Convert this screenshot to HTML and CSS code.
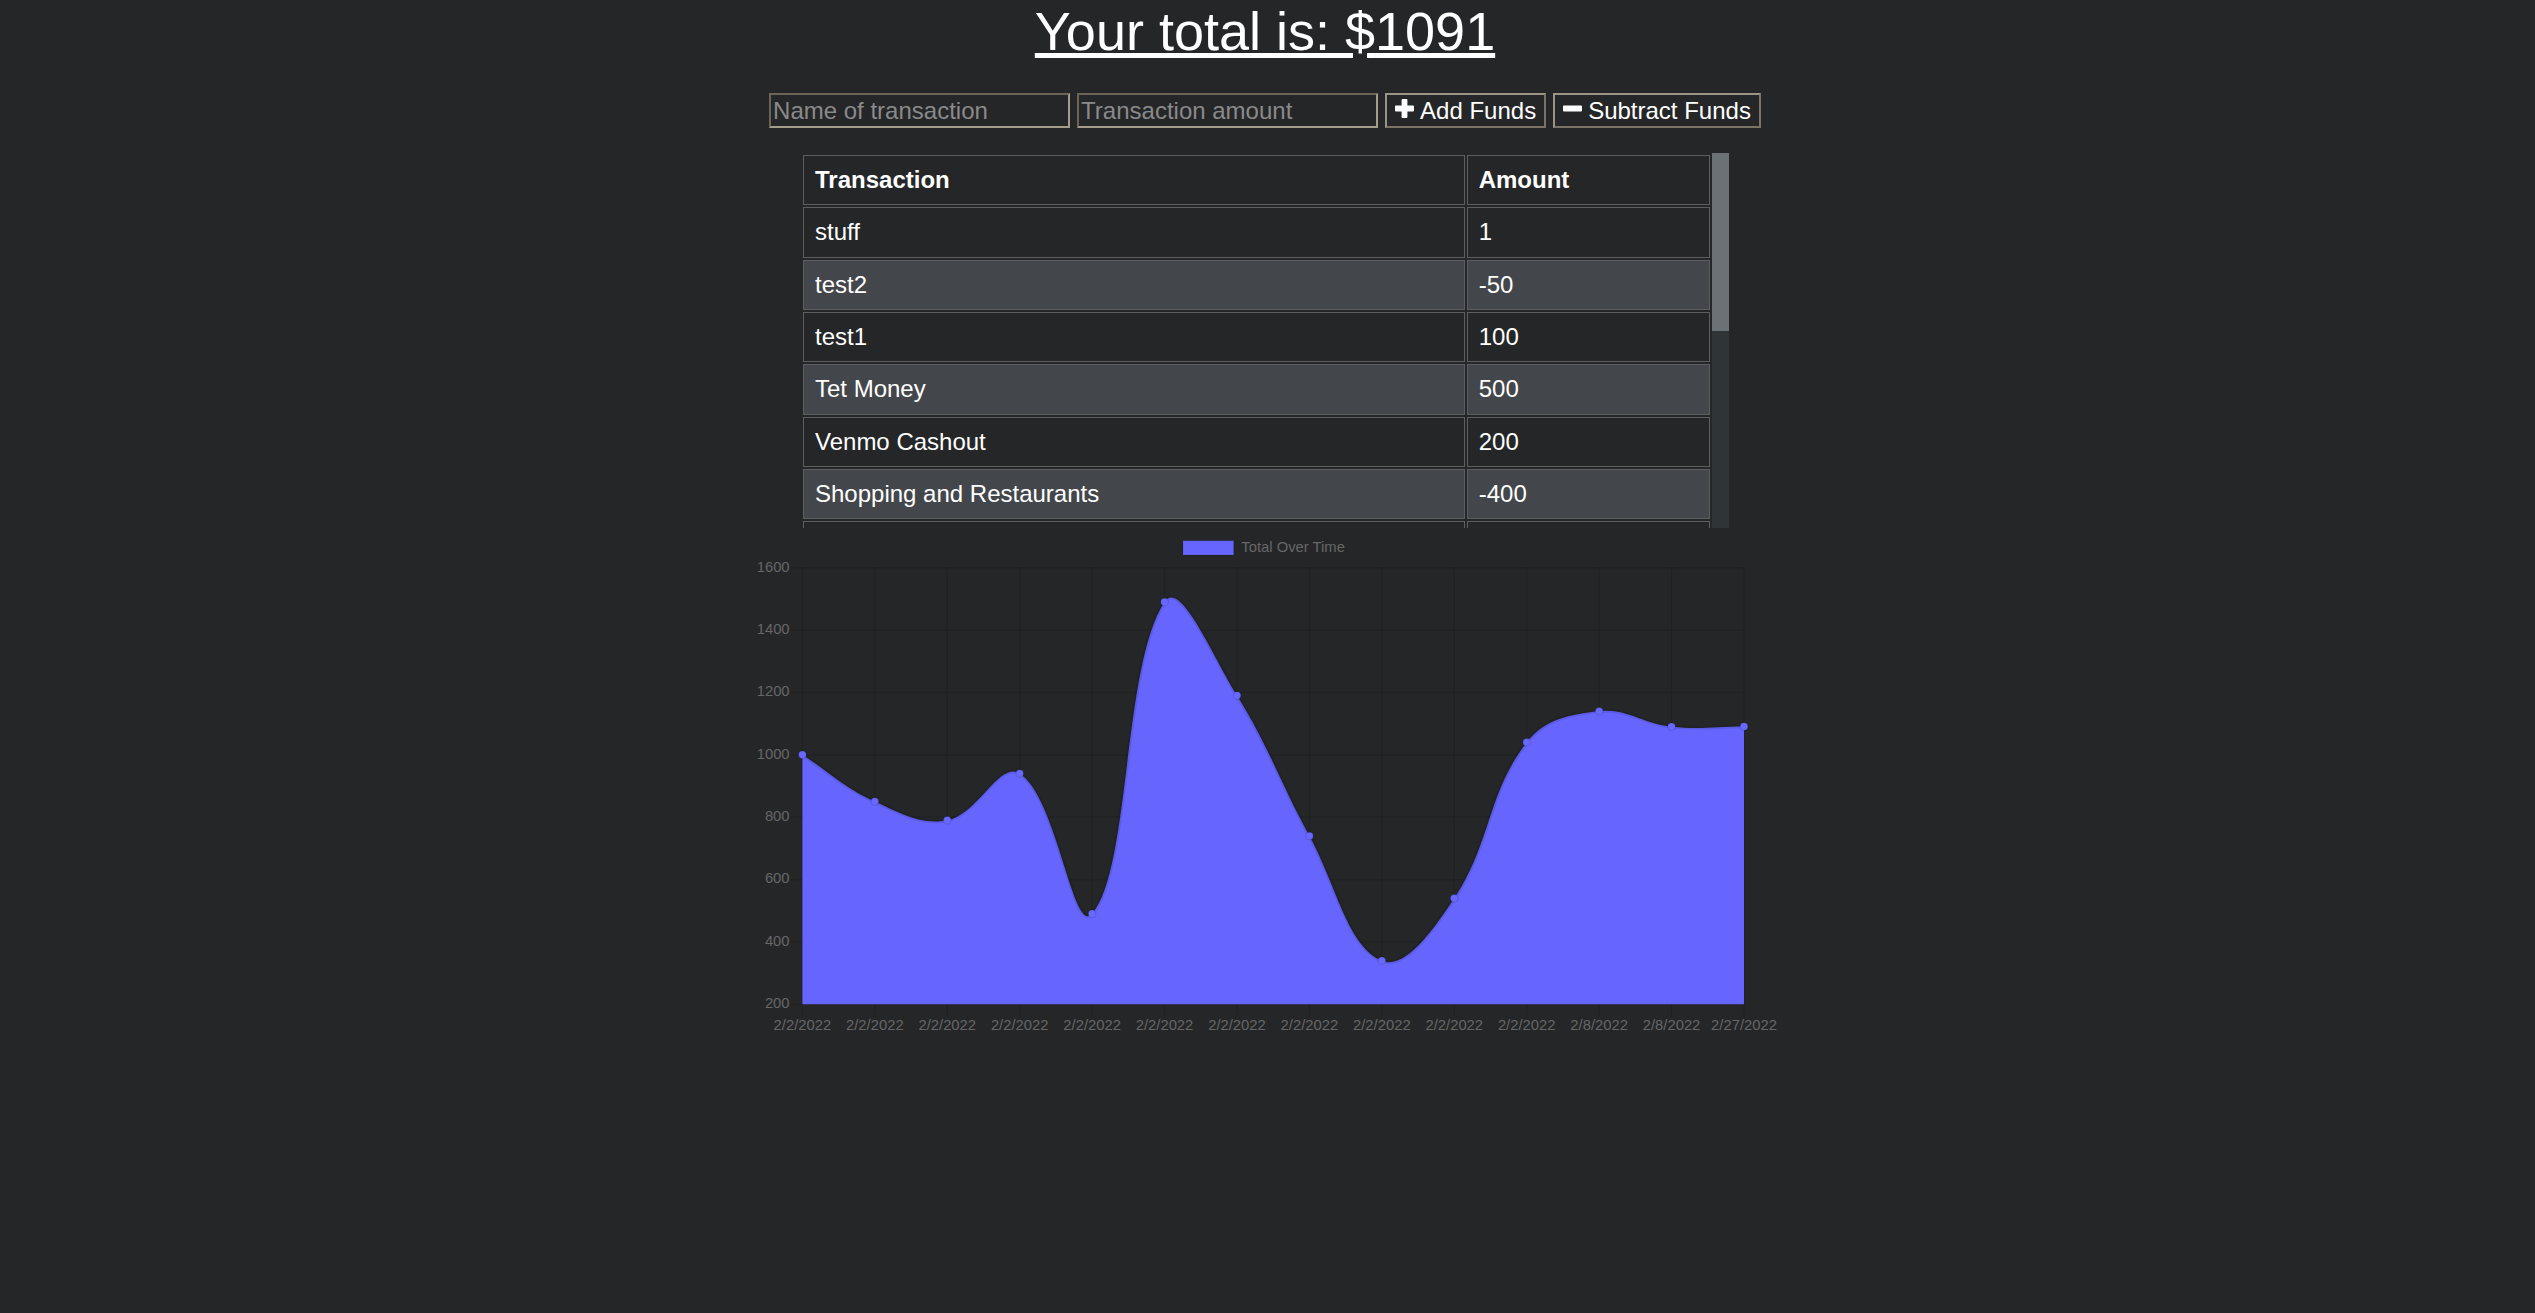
FILE: index.html
```html
<!DOCTYPE html>
<html lang="en">
<head>
<meta charset="utf-8">
<title>Budget Tracker</title>
<link rel="stylesheet" href="styles.css">
</head>
<body>
<h1 class="title">Your total is: $<span id="total">1091</span></h1>

<div class="entry">
  <input class="field" type="text" placeholder="Name of transaction">
  <input class="field" type="number" placeholder="Transaction amount">
  <button class="btn" type="button">
    <svg class="btn-icon" viewBox="0 0 19 19" aria-hidden="true"><path d="M7.6 0h3.8a1 1 0 0 1 1 1v5.6h5.6a1 1 0 0 1 1 1v3.8a1 1 0 0 1-1 1h-5.6v5.6a1 1 0 0 1-1 1H7.6a1 1 0 0 1-1-1v-5.6H1a1 1 0 0 1-1-1V7.6a1 1 0 0 1 1-1h5.6V1a1 1 0 0 1 1-1z"/></svg>
    <span>Add Funds</span>
  </button>
  <button class="btn" type="button">
    <svg class="btn-icon" viewBox="0 0 19 19" aria-hidden="true"><path d="M1 6.6h17a1 1 0 0 1 1 1v3.8a1 1 0 0 1-1 1H1a1 1 0 0 1-1-1V7.6a1 1 0 0 1 1-1z"/></svg>
    <span>Subtract Funds</span>
  </button>
</div>

<div class="ledger">
  <div class="ledger-view">
    <table class="ledger-table">
      <colgroup><col class="col-name"><col class="col-amt"></colgroup>
      <thead>
        <tr><th>Transaction</th><th>Amount</th></tr>
      </thead>
      <tbody>
        <tr><td>stuff</td><td>1</td></tr>
        <tr><td>test2</td><td>-50</td></tr>
        <tr><td>test1</td><td>100</td></tr>
        <tr><td>Tet Money</td><td>500</td></tr>
        <tr><td>Venmo Cashout</td><td>200</td></tr>
        <tr><td>Shopping and Restaurants</td><td>-400</td></tr>
        <tr><td>Rent</td><td>-450</td></tr>
        <tr><td>Groceries</td><td>-300</td></tr>
        <tr><td>Paycheck</td><td>1000</td></tr>
        <tr><td>Car Repair</td><td>-450</td></tr>
        <tr><td>Refund</td><td>150</td></tr>
        <tr><td>Dinner</td><td>-60</td></tr>
        <tr><td>Utilities</td><td>-150</td></tr>
        <tr><td>Initial Deposit</td><td>1000</td></tr>
      </tbody>
    </table>
  </div>
  <div class="ledger-track" aria-hidden="true"><div class="ledger-thumb"></div></div>
</div>

<svg id="chart" class="chart" viewBox="0 0 1040 520" aria-label="Total Over Time"></svg>

<script src="app.js"></script>
</body>
</html>
```

FILE: styles.css
```css
html, body {
  margin: 0;
}

body {
  background: #252628;
  color: #ffffff;
  font-family: "Liberation Sans", Arial, sans-serif;
  padding: 0 5px 0 0;
}

.title {
  margin: 0;
  padding-top: 1px;
  font-size: 54px;
  line-height: 60px;
  font-weight: normal;
  text-align: center;
  text-decoration: underline;
}

.entry {
  display: flex;
  justify-content: center;
  align-items: center;
  gap: 7px;
  margin-top: 32.3px;
  height: 35px;
}

.field {
  box-sizing: border-box;
  width: 301px;
  height: 35px;
  margin: 0;
  padding: 1px 2px;
  font: 24px "Liberation Sans", Arial, sans-serif;
  color: #ffffff;
  background: transparent;
  border: 2px solid;
  border-color: #6b6457 #a59c8c #a59c8c #6b6457;
  outline: none;
}

.field::placeholder {
  color: #8a8a8a;
}

.field::-webkit-outer-spin-button,
.field::-webkit-inner-spin-button {
  -webkit-appearance: none;
  margin: 0;
}

.btn {
  box-sizing: border-box;
  height: 35px;
  margin: 0;
  display: flex;
  align-items: center;
  gap: 6px;
  padding: 0 8px;
  font: 24px "Liberation Sans", Arial, sans-serif;
  color: #ffffff;
  background: transparent;
  border: 2px solid;
  border-color: #9b9384 #7a7366 #7a7366 #9b9384;
}

.btn-icon {
  width: 19px;
  height: 19px;
  flex: none;
  fill: #ffffff;
  margin-bottom: 4px;
}

.ledger {
  display: flex;
  width: 928px;
  height: 375px;
  margin: 24.7px auto 0;
}

.ledger-view {
  flex: 1;
  min-width: 0;
  overflow-y: auto;
  overflow-x: hidden;
  scrollbar-width: none;
}

.ledger-track {
  flex: none;
  width: 17px;
  background: #2f3536;
}

.ledger-thumb {
  height: 178px;
  background: #6b7275;
}

.ledger-table {
  width: 100%;
  table-layout: fixed;
  border-collapse: separate;
  border-spacing: 2px;
  font-size: 24px;
}

.col-name {
  width: 661.7px;
}

.col-amt {
  width: 243.7px;
}

.ledger-table th,
.ledger-table td {
  box-sizing: border-box;
  height: 50.33px;
  padding: 0 11px;
  line-height: 48.33px;
  border: 1px solid #5c5e60;
  text-align: left;
  white-space: nowrap;
  overflow: hidden;
}

.ledger-table th {
  font-weight: bold;
}

.ledger-table tbody tr:nth-child(even) td {
  background: #43474b;
}

.chart {
  display: block;
  width: 1040px;
  height: 520px;
  margin: 0 auto;
}

.chart .grid {
  stroke: rgba(0, 0, 0, 0.12);
  stroke-width: 1.25;
}

.chart .tick {
  font-family: "Liberation Sans", Arial, sans-serif;
  font-size: 14.8px;
  fill: #666666;
}

.chart .area {
  fill: #6666ff;
}

.chart .line {
  fill: none;
  stroke: rgba(0, 0, 0, 0.1);
  stroke-width: 3.75;
}

.chart .dot {
  fill: #6868ff;
  stroke: rgba(0, 0, 0, 0.1);
  stroke-width: 1.25;
}

.chart .legend-box {
  fill: #6666ff;
  stroke: rgba(0, 0, 0, 0.1);
  stroke-width: 1.25;
}
```

FILE: app.js
```js
(function () {
  var NS = 'http://www.w3.org/2000/svg';
  var svg = document.getElementById('chart');
  var data = [1000, 850, 790, 940, 490, 1490, 1190, 740, 340, 540, 1040, 1140, 1090, 1091];
  var labels = [];
  for (var k = 0; k < 11; k++) labels.push('2/2/2022');
  labels.push('2/8/2022', '2/8/2022', '2/27/2022');

  var L = 57.4, R = 999, T = 39.7, B = 476.3;
  function yOf(v) { return B - (v - 200) / 1400 * (B - T); }
  function xOf(i) { return L + i * (R - L) / (data.length - 1); }
  function clamp(v, a, b) { return Math.max(a, Math.min(b, v)); }
  function el(name, attrs, text) {
    var e = document.createElementNS(NS, name);
    for (var a in attrs) e.setAttribute(a, attrs[a]);
    if (text != null) e.textContent = text;
    svg.appendChild(e);
    return e;
  }

  // horizontal grid + y labels
  for (var v = 200; v <= 1600; v += 200) {
    var y = yOf(v);
    el('line', { x1: L - 12.5, y1: y, x2: R, y2: y, 'class': 'grid' });
    el('text', { x: 44.6, y: y, 'class': 'tick', 'text-anchor': 'end', 'dominant-baseline': 'middle' }, String(v));
  }
  // vertical grid + x labels
  for (var i = 0; i < data.length; i++) {
    var x = xOf(i);
    el('line', { x1: x, y1: T, x2: x, y2: B + 12.5, 'class': 'grid' });
    el('text', { x: x, y: 498, 'class': 'tick', 'text-anchor': 'middle', 'dominant-baseline': 'middle' }, labels[i]);
  }

  // spline (Chart.js v2 style, tension 0.4, capped to chart area)
  var pts = data.map(function (val, idx) { return { x: xOf(idx), y: yOf(val) }; });
  var t = 0.4;
  pts.forEach(function (p, idx) {
    var prev = pts[idx > 0 ? idx - 1 : 0];
    var next = pts[idx < pts.length - 1 ? idx + 1 : pts.length - 1];
    var d01 = Math.hypot(p.x - prev.x, p.y - prev.y);
    var d12 = Math.hypot(next.x - p.x, next.y - p.y);
    var s01 = d01 / (d01 + d12), s12 = d12 / (d01 + d12);
    if (isNaN(s01)) s01 = 0;
    if (isNaN(s12)) s12 = 0;
    var fa = t * s01, fb = t * s12;
    p.cpx = clamp(p.x - fa * (next.x - prev.x), L, R);
    p.cpy = clamp(p.y - fa * (next.y - prev.y), T, B);
    p.cnx = clamp(p.x + fb * (next.x - prev.x), L, R);
    p.cny = clamp(p.y + fb * (next.y - prev.y), T, B);
  });
  var d = 'M' + pts[0].x + ',' + pts[0].y;
  for (var j = 1; j < pts.length; j++) {
    d += ' C' + pts[j - 1].cnx + ',' + pts[j - 1].cny + ' ' + pts[j].cpx + ',' + pts[j].cpy + ' ' + pts[j].x + ',' + pts[j].y;
  }
  el('path', { d: d + ' L' + pts[pts.length - 1].x + ',' + B + ' L' + pts[0].x + ',' + B + ' Z', 'class': 'area' });
  el('path', { d: d, 'class': 'line' });
  pts.forEach(function (p) { el('circle', { cx: p.x, cy: p.y, r: 3.75, 'class': 'dot' }); });

  // legend
  el('rect', { x: 438, y: 12.7, width: 50.7, height: 14.3, 'class': 'legend-box' });
  el('text', { x: 496.3, y: 20.5, 'class': 'tick', 'dominant-baseline': 'middle' }, 'Total Over Time');
})();
```
